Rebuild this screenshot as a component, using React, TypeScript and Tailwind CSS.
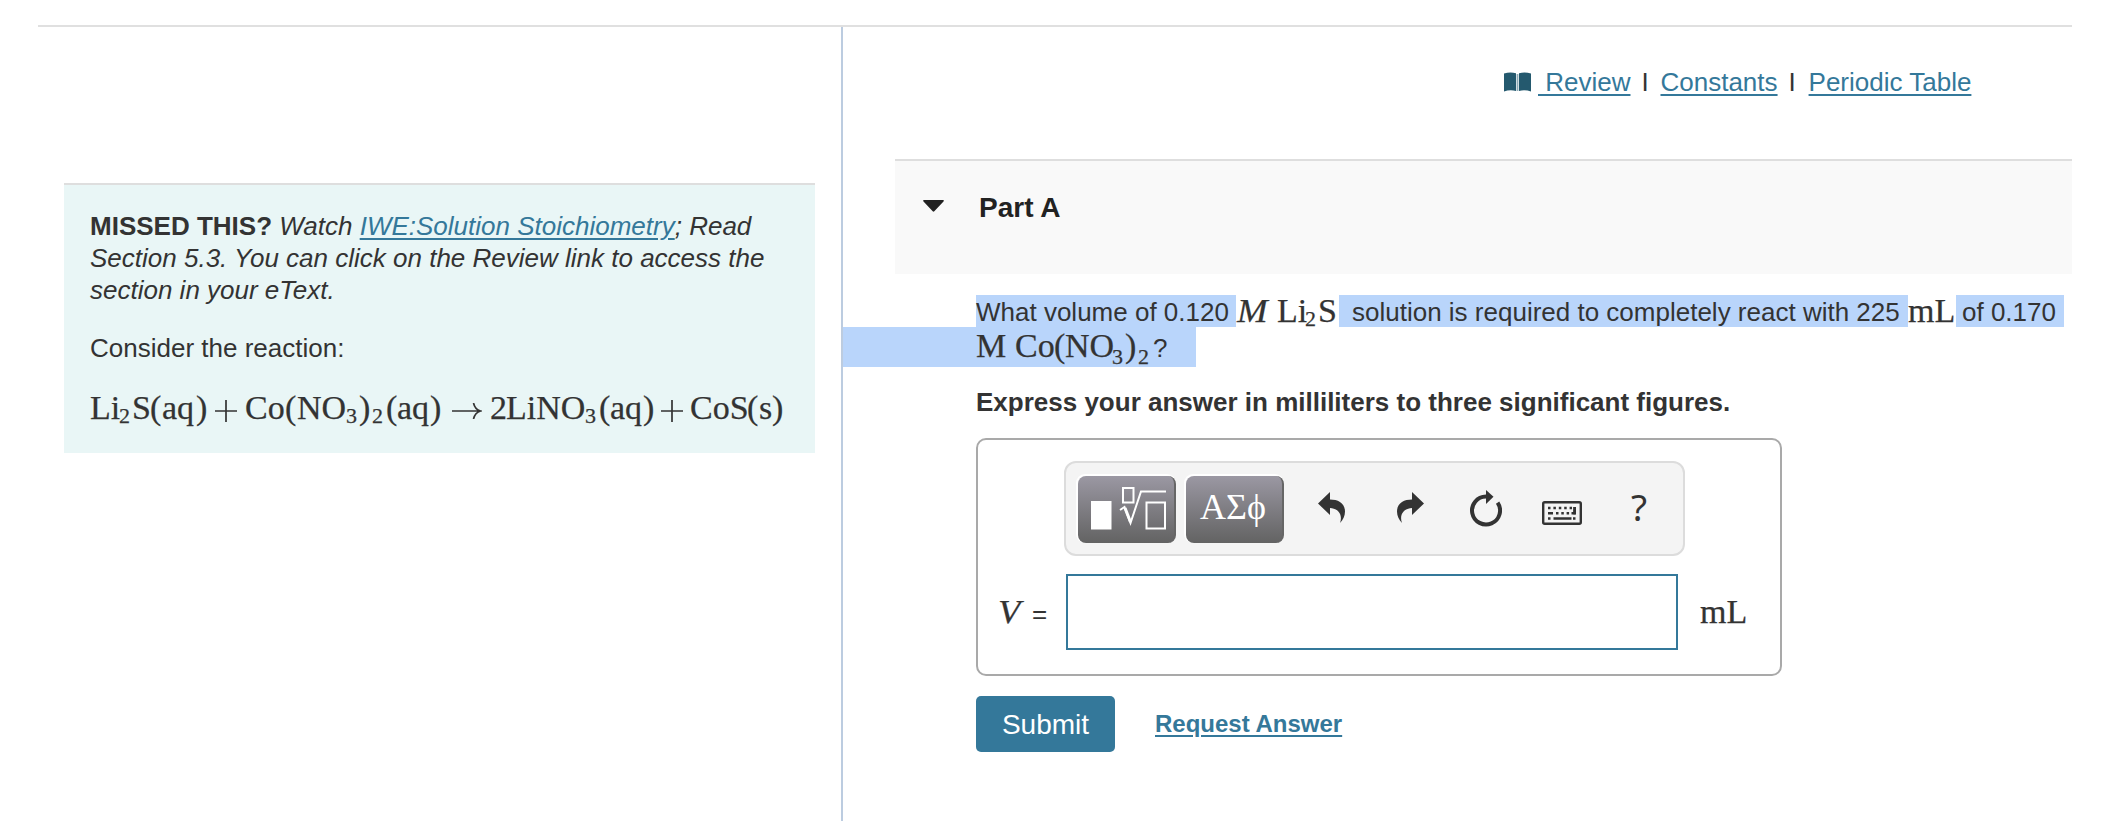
import React from "react";

interface Token {
  text: string;
  width: string;
  kind?: "sub" | "low" | "italic";
}

const reaction: Token[] = [
  { text: "Li", width: "w-[28px]" },
  { text: "2", width: "w-[14px]", kind: "sub" },
  { text: "S", width: "w-[18px]" },
  { text: "(", width: "w-[12px]" },
  { text: "aq", width: "w-[34px]" },
  { text: ")", width: "w-[19px]" },
  { text: "+", width: "w-[30px]" },
  { text: "Co", width: "w-[40px]" },
  { text: "(", width: "w-[12px]" },
  { text: "NO", width: "w-[48px]" },
  { text: "3", width: "w-[14px]", kind: "sub" },
  { text: ")", width: "w-[12px]" },
  { text: "2", width: "w-[15px]", kind: "sub" },
  { text: "(", width: "w-[11px]" },
  { text: "aq", width: "w-[33px]" },
  { text: ")", width: "w-[22px]" },
  { text: "→", width: "w-[38px]" },
  { text: "2", width: "w-[16px]" },
  { text: "LiNO", width: "w-[78px]" },
  { text: "3", width: "w-[15px]", kind: "sub" },
  { text: "(", width: "w-[11px]" },
  { text: "aq", width: "w-[33px]" },
  { text: ")", width: "w-[18px]" },
  { text: "+", width: "w-[29px]" },
  { text: "CoS", width: "w-[57px]" },
  { text: "(", width: "w-[12px]" },
  { text: "s", width: "w-[13px]" },
  { text: ")", width: "w-[12px]" },
];

const lithiumSulfide: Token[] = [
  { text: "M", width: "w-[40px]", kind: "italic" },
  { text: "Li", width: "w-[27px]" },
  { text: "2", width: "w-[14px]", kind: "sub" },
  { text: "S", width: "w-[22px]" },
];

const cobaltNitrate: Token[] = [
  { text: "M", width: "w-[39px]" },
  { text: "Co", width: "w-[39px]" },
  { text: "(", width: "w-[11px]" },
  { text: "NO", width: "w-[46px]" },
  { text: "3", width: "w-[14px]", kind: "low" },
  { text: ")", width: "w-[12px]" },
  { text: "2", width: "w-[16px]", kind: "low" },
];

const tokenStyles = {
  sub: "text-[22px] translate-y-[4px] pl-px",
  low: "text-[22px] translate-y-[7px] pl-px",
  italic: "italic",
};

const mathFont = "font-['Liberation_Serif',serif] text-[34px] [-webkit-text-stroke:0.25px]";

function Formula({ tokens }: { tokens: Token[] }) {
  return (
    <span className={`inline-flex items-baseline whitespace-nowrap leading-8 ${mathFont}`}>
      {tokens.map((token, i) => (
        <span
          key={i}
          className={`shrink-0 ${token.width} ${token.kind ? tokenStyles[token.kind] : ""}`}
        >
          {token.text === "→" ? (
            <svg className="inline-block" width="30" height="16" viewBox="0 0 30 16" fill="none" stroke="currentColor" strokeWidth="1.7">
              <path d="M0 8H28M21.500 0Q23 6.500 28.500 8Q23 9.500 21.500 16" />
            </svg>
          ) : token.text === "+" ? (
            <svg className="inline-block" width="22" height="22" viewBox="0 0 22 22" stroke="currentColor" strokeWidth="1.7">
              <path d="M11 0V22M0 11H22" />
            </svg>
          ) : token.kind === "italic" ? (
            <span className="inline-block origin-left scale-x-108">{token.text}</span>
          ) : (
            token.text
          )}
        </span>
      ))}
    </span>
  );
}

function BookIcon() {
  return (
    <svg width="27" height="20" viewBox="0 0 27 20" fill="#24596e">
      <path d="M0 1.500Q6 -0.500 12 1.200V19Q6 17.500 0 19.500Z" />
      <path d="M27 1.500Q21 -0.500 15 1.200V19Q21 17.500 27 19.500Z" />
      <path d="M12.600 2H14.400V19H12.600Z" fill="#8aa9b5" />
    </svg>
  );
}

function ReplyArrow({ className = "" }: { className?: string }) {
  return (
    <svg className={className} width="28" height="32" viewBox="0 0 28 32" fill="#333">
      <path d="M0 11.500L12 0V7.500C20 7.500 27 11 27 19.500C27 24 25 28 22 31C24 26 23.500 17 12 16V23Z" />
    </svg>
  );
}

function ResetIcon() {
  return (
    <svg width="32" height="38" viewBox="0 0 32 38" fill="none">
      <path d="M16 6.500A14 14 0 1 0 27.600 12.600" stroke="#333" strokeWidth="4" />
      <path d="M16 0L23.500 6.800L16 14Z" fill="#333" />
    </svg>
  );
}

function KeyboardIcon() {
  return (
    <svg width="40" height="24" viewBox="0 0 40 24" fill="none" stroke="#333">
      <rect x="1.200" y="1.200" width="37.600" height="21.600" rx="1.500" strokeWidth="2.400" />
      <path d="M6 7H30M6 17.500H8.500M31 17.500H34" strokeWidth="2.500" strokeDasharray="2.500 2.900" />
      <path d="M6 12.200H11M14 12.200H16.500M19.300 12.200H21.800M24.600 12.200H27.100M29.500 12.200H32.500V6M11.500 17.500H29.500" strokeWidth="2.400" />
      <path d="M32.700 6V13.400" strokeWidth="2.600" />
    </svg>
  );
}

function TemplateIcon() {
  return (
    <svg width="76" height="44" viewBox="0 0 76 44" fill="none" stroke="white">
      <rect x="0" y="15" width="20.500" height="28.500" fill="white" stroke="none" />
      <rect x="32" y="2" width="10.500" height="14.500" strokeWidth="2" />
      <path d="M29 24L33.500 21L39.500 37L50 5.500H75" strokeWidth="2" />
      <path d="M34 22L39.500 36" strokeWidth="3" />
      <rect x="55.500" y="16.500" width="18.500" height="26" strokeWidth="2" />
    </svg>
  );
}

const toolButton =
  "flex h-[67px] w-[98px] rounded-[8px] border-r-2 border-[#666] bg-linear-to-b from-[#9b98a3] to-[#636363] shadow-[-1px_-1px_0_1px_#fff]";

function IntroPanel() {
  return (
    <div className="ml-[26px] mt-[156px] h-[270px] w-[751px] border-t-2 border-[#dedede] bg-[#e9f6f6] px-[26px] pt-[25px]">
      <p className="whitespace-nowrap italic">
        <b className="not-italic">MISSED THIS?</b> Watch{" "}
        <a href="#" className="text-[#34789a] underline decoration-2 underline-offset-[3px]">
          IWE:Solution Stoichiometry
        </a>
        ; Read
        <br />
        Section 5.3. You can click on the Review link to access the
        <br />
        section in your eText.
      </p>
      <p className="mt-[26px]">Consider the reaction:</p>
      <div className="mt-[28px] flex">
        <Formula tokens={reaction} />
      </div>
    </div>
  );
}

function ResourceLinks() {
  const link = "text-[#34789a] underline decoration-2 underline-offset-[3px]";
  return (
    <div className="flex h-[132px] items-start pl-[661px] pt-[39px]">
      <div className="mr-[7px] pt-[6px]">
        <BookIcon />
      </div>
      <a href="#" className={`whitespace-pre ${link}`}> Review</a>
      <span className="ml-[11px] w-[19px]">I</span>
      <a href="#" className={link}>Constants</a>
      <span className="ml-[11px] w-[20px]">I</span>
      <a href="#" className={link}>Periodic Table</a>
    </div>
  );
}

function Question() {
  return (
    <div className="mt-[21px] whitespace-nowrap">
      <div className="ml-[133px] flex h-8 leading-[34px]">
        <span className="w-[260px] bg-[#b9d5fb]">What volume of 0.120</span>
        <span className="w-[103px] pl-px">
          <Formula tokens={lithiumSulfide} />
        </span>
        <span className="w-[569px] bg-[#b9d5fb] pl-[13px]">
          solution is required to completely react with 225
        </span>
        <span className={`w-[48px] leading-8 ${mathFont}`}>mL</span>
        <span className="w-[108px] bg-[#b9d5fb] pl-[6px]">of 0.170</span>
      </div>
      <div className="flex h-10 w-[353px] items-baseline bg-[#b9d5fb] pl-[133px] pt-[3px]">
        <Formula tokens={cobaltNitrate} />
        <span>?</span>
      </div>
    </div>
  );
}

function AnswerBox() {
  return (
    <div className="mt-[20px] h-[238px] w-[806px] rounded-[10px] border-2 border-[#a9a9a9] pt-[21px]">
      <div className="ml-[86px] flex h-[95px] w-[621px] items-start rounded-[12px] border-2 border-[#dcdcdc] bg-[#f4f4f4] pl-[12px] pt-[13px]">
        <button className={`${toolButton} pl-[13px] pt-[10px]`} aria-label="Templates">
          <TemplateIcon />
        </button>
        <button
          className={`${toolButton} ml-[10px] justify-center pr-[2px] pt-[11px] font-['Liberation_Serif',serif] text-[36px] leading-[40px] text-white`}
        >
          ΑΣϕ
        </button>
        <button className="ml-[34px] mt-[16px]" aria-label="Undo">
          <ReplyArrow />
        </button>
        <button className="ml-[50px] mt-[16px]" aria-label="Redo">
          <ReplyArrow className="-scale-x-100" />
        </button>
        <button className="ml-[46px] mt-[14px]" aria-label="Reset">
          <ResetIcon />
        </button>
        <button className="ml-[40px] mt-[25px]" aria-label="Keyboard">
          <KeyboardIcon />
        </button>
        <button className="ml-[49px] mt-[11px] font-['Noto_Sans',sans-serif] text-[37px] leading-[40px]">?</button>
      </div>
      <div className="mt-[18px] flex h-[76px] items-center">
        <span className={`w-[33px] pl-[20px] italic ${mathFont}`}>
          <span className="inline-block origin-left scale-x-108">V</span>
        </span>
        <span className="ml-[21px] mt-[4px] w-[34px]">=</span>
        <input className="h-[76px] w-[612px] border-2 border-[#34789a] bg-white" />
        <span className={`ml-[22px] ${mathFont}`}>mL</span>
      </div>
    </div>
  );
}

export default function App() {
  return (
    <div className="h-[821px] overflow-hidden bg-white pl-[38px] pt-[25px] font-['Liberation_Sans',Arial,sans-serif] text-[26px] leading-8 text-[#333]">
      <div className="flex h-full w-[2034px] border-t-2 border-[#e0e0e0]">
        <section className="w-[803px] shrink-0">
          <IntroPanel />
        </section>

        <section className="w-[1231px] shrink-0 border-l-2 border-[#bccce0]">
          <ResourceLinks />

          {/* Part header */}
          <div className="ml-[52px] flex h-[115px] items-start border-t-2 border-[#dedede] bg-[#f9f9f9] pl-[28px] pt-[31px]">
            <svg className="mt-[8px]" width="21" height="12" viewBox="0 0 21 12" fill="#222">
              <path d="M1 0H20Q21.500 0.500 20.500 1.500L11.300 11.300Q10.500 12 9.700 11.300L0.500 1.500Q-0.500 0.500 1 0Z" />
            </svg>
            <h2 className="ml-[35px] text-[28px] font-bold text-[#222]">Part A</h2>
          </div>

          <Question />

          <div className="ml-[133px]">
            <p className="mt-[19px] font-bold">
              Express your answer in milliliters to three significant figures.
            </p>
            <AnswerBox />
            <div className="mt-[20px] flex items-center">
              <button className="h-[56px] w-[139px] rounded-[5px] bg-[#34789a] pt-[2px] text-[28px] text-white">
                Submit
              </button>
              <a href="#" className="ml-[40px] text-[24px] font-bold text-[#34789a] underline decoration-2 underline-offset-[3px]">
                Request Answer
              </a>
            </div>
          </div>
        </section>
      </div>
    </div>
  );
}
